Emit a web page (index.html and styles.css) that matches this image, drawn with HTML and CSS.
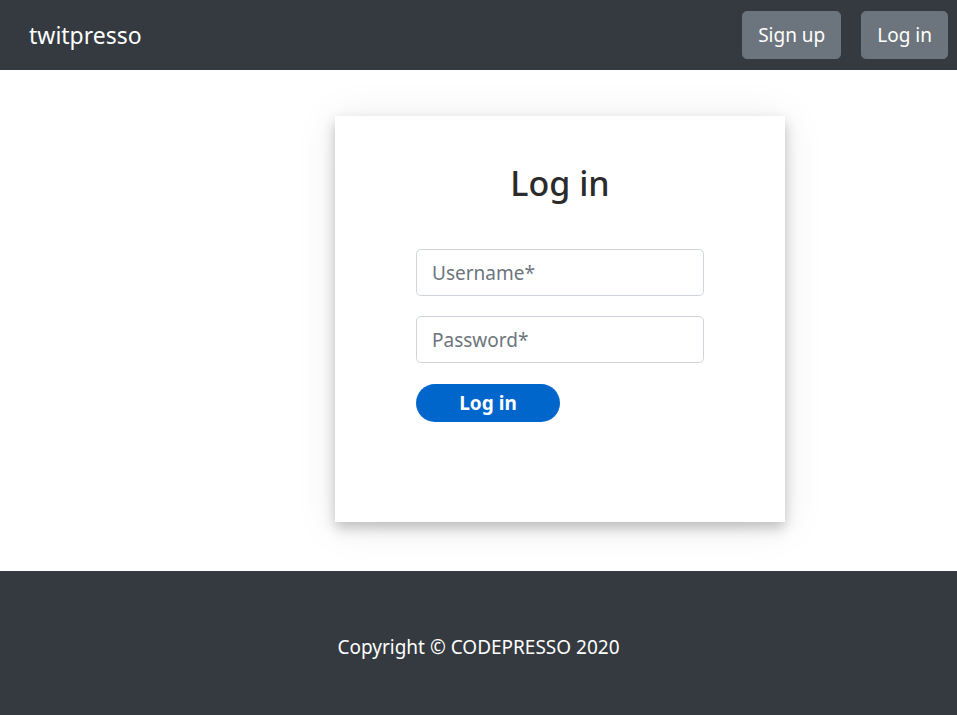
FILE: index.html
```html
<!DOCTYPE html>
<html lang="en">
<head>
<meta charset="utf-8">
<title>twitpresso</title>
<link rel="stylesheet" href="styles.css">
</head>
<body>
<nav class="navbar">
  <a class="brand" href="#">twitpresso</a>
  <div class="nav-actions">
    <button class="nav-btn">Sign up</button>
    <button class="nav-btn">Log in</button>
  </div>
</nav>
<main class="main">
  <section class="card">
    <h2 class="title">Log in</h2>
    <form class="form">
      <input class="field" type="text" placeholder="Username*">
      <input class="field" type="password" placeholder="Password*">
      <button class="submit" type="button">Log in</button>
    </form>
  </section>
</main>
<footer class="footer">
  <p class="copy">Copyright © CODEPRESSO 2020</p>
</footer>
</body>
</html>
```

FILE: styles.css
```css
* { box-sizing: border-box; }
html, body { margin: 0; padding: 0; }
body {
  font-family: "Noto Sans", "Open Sans", sans-serif;
  color: #212529;
  background: #fff;
}
.navbar {
  height: 70px;
  background: #343a40;
  display: flex;
  align-items: center;
  justify-content: space-between;
  padding: 0 9px 0 29px;
}
.brand {
  color: #fff;
  text-decoration: none;
  font-size: 23px;
  line-height: 1;
}
.nav-actions {
  display: flex;
  gap: 20px;
}
.nav-btn {
  height: 48px;
  padding: 0 15px;
  background: #6c757d;
  color: #fff;
  border: 1px solid #6c757d;
  border-radius: 4.8px;
  font-family: inherit;
  font-size: 19px;
}
.main {
  padding: 46px 0 49px 335px;
}
.card {
  width: 450px;
  height: 406px;
  background: #fff;
  box-shadow: 0 6px 12px rgba(0,0,0,.22), 0 4px 40px rgba(0,0,0,.09);
  padding-top: 45px;
}
.title {
  margin: 0 0 44px;
  text-align: center;
  font-size: 34px;
  font-weight: 500;
  line-height: 44px;
  color: #2b2b2b;
}
.form {
  width: 288px;
  margin: 0 auto;
  display: flex;
  flex-direction: column;
  align-items: flex-start;
  gap: 20px;
}
.field {
  width: 288px;
  height: 47px;
  padding: 0 15px;
  border: 1px solid #ced4da;
  border-radius: 4.8px;
  font-family: inherit;
  font-size: 19px;
  color: #495057;
}
.field::placeholder { color: #6c757d; }
.submit {
  width: 144px;
  height: 38px;
  margin-top: 1px;
  border: none;
  border-radius: 19px;
  background: #0066cc;
  color: #fff;
  font-family: inherit;
  font-size: 19px;
  font-weight: 700;
}
.footer {
  height: 144px;
  padding-top: 8px;
  background: #343a40;
  display: flex;
  align-items: center;
  justify-content: center;
}
.copy {
  margin: 0;
  color: #fff;
  font-size: 19px;
}
```
